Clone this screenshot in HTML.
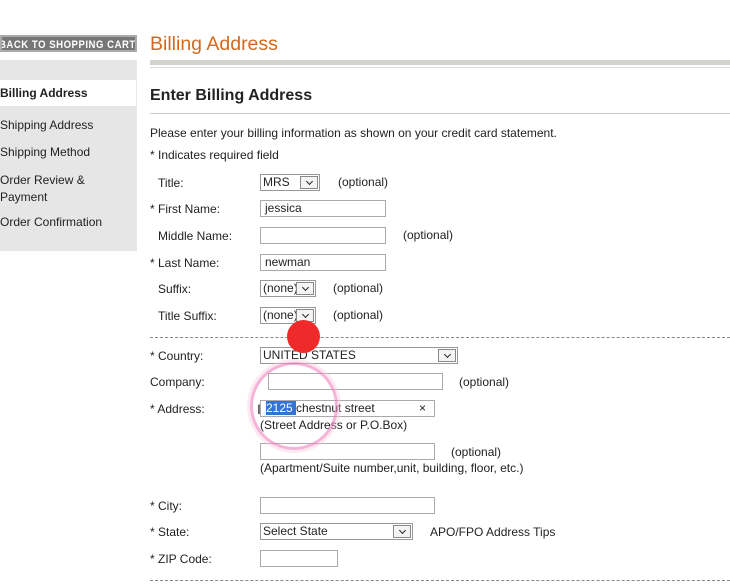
<!DOCTYPE html><html><head><style>
*{margin:0;padding:0;box-sizing:border-box}
body{width:730px;height:587px;overflow:hidden;background:#fff;font-family:"Liberation Sans",Arial,sans-serif;font-size:12px;color:#222;position:relative}
.a{position:absolute;white-space:nowrap}
.l{position:absolute;line-height:14px}
.in{position:absolute;height:17px;border:1px solid #aaa;background:#fff;padding:1px 4px;font-size:12px;line-height:13px}
.sel{position:absolute;height:17px;border:1px solid #999;background:#fff;padding:0 2px;font-size:12px;line-height:15px}
.sel i{position:absolute;right:1px;top:1px;width:18px;height:13px;border:1px solid #888;background:#f4f4f4}
.sel i:after{content:"";position:absolute;left:6px;top:2px;width:4px;height:4px;border-right:1.5px solid #222;border-bottom:1.5px solid #222;transform:rotate(45deg)}
</style></head><body>
<div class="a" style="left:0;top:35px;width:137px;height:17px;background:#777;border:2px solid #aaa;overflow:hidden"><span style="display:inline-block;color:#fff;font-weight:bold;font-size:11px;line-height:13px;transform:scaleX(0.87);transform-origin:0 0;letter-spacing:0.6px;margin-left:-3px">BACK TO SHOPPING CART</span></div>
<div class="a" style="left:0;top:60px;width:137px;height:191px;background:#e6e6e6"></div>
<div class="a" style="left:0;top:80px;width:136px;height:26px;background:#fff;font-weight:bold;line-height:26px">Billing Address</div>
<div class="l" style="left:0;top:118px">Shipping Address</div>
<div class="l" style="left:0;top:145px">Shipping Method</div>
<div class="l" style="left:0;top:172px;line-height:17px">Order Review &amp;<br>Payment</div>
<div class="l" style="left:0;top:215px">Order Confirmation</div>
<div class="a" style="left:150px;top:33px;font-size:19.5px;color:#d2691e">Billing Address</div>
<div class="a" style="left:150px;top:60px;width:580px;height:5px;background:#d5d4cc"></div>
<div class="a" style="left:150px;top:67px;width:580px;height:1px;background:#ddd"></div>
<div class="a" style="left:150px;top:87px;font-size:16px;font-weight:bold">Enter Billing Address</div>
<div class="a" style="left:150px;top:113px;width:580px;height:1px;background:#ccc"></div>
<div class="l" style="left:150px;top:126px">Please enter your billing information as shown on your credit card statement.</div>
<div class="l" style="left:150px;top:148px">* Indicates required field</div>
<div class="l" style="left:158px;top:176px">Title:</div>
<div class="sel" style="left:260px;top:174px;width:60px">MRS<i></i></div>
<div class="l" style="left:338px;top:175px">(optional)</div>
<div class="l" style="left:150px;top:202px">* First Name:</div>
<div class="in" style="left:260px;top:200px;width:126px">jessica</div>
<div class="l" style="left:158px;top:229px">Middle Name:</div>
<div class="in" style="left:260px;top:227px;width:126px"></div>
<div class="l" style="left:403px;top:228px">(optional)</div>
<div class="l" style="left:150px;top:256px">* Last Name:</div>
<div class="in" style="left:260px;top:254px;width:126px">newman</div>
<div class="l" style="left:158px;top:282px">Suffix:</div>
<div class="sel" style="left:260px;top:280px;width:56px">(none)<i></i></div>
<div class="l" style="left:333px;top:281px">(optional)</div>
<div class="l" style="left:158px;top:309px">Title Suffix:</div>
<div class="sel" style="left:260px;top:307px;width:56px">(none)<i></i></div>
<div class="l" style="left:333px;top:308px">(optional)</div>
<div class="a" style="left:150px;top:337px;width:580px;border-top:1px dashed #888"></div>
<div class="l" style="left:150px;top:349px">* Country:</div>
<div class="sel" style="left:260px;top:347px;width:198px">UNITED STATES<i></i></div>
<div class="l" style="left:150px;top:375px">Company:</div>
<div class="in" style="left:268px;top:373px;width:175px"></div>
<div class="l" style="left:459px;top:375px">(optional)</div>
<div class="l" style="left:150px;top:402px">* Address:</div>
<div class="in" style="left:260px;top:400px;width:175px;padding-left:5px"><span style="background:#3373d6;color:#fff">2125 </span>chestnut street<span style="position:absolute;right:8px">×</span></div>
<div class="l" style="left:260px;top:418px">(Street Address or P.O.Box)</div>
<div class="in" style="left:260px;top:443px;width:175px"></div>
<div class="l" style="left:451px;top:445px">(optional)</div>
<div class="l" style="left:260px;top:461px">(Apartment/Suite number,unit, building, floor, etc.)</div>
<div class="l" style="left:150px;top:499px">* City:</div>
<div class="in" style="left:260px;top:497px;width:175px"></div>
<div class="l" style="left:150px;top:525px">* State:</div>
<div class="sel" style="left:260px;top:523px;width:153px">Select State<i></i></div>
<div class="l" style="left:430px;top:525px">APO/FPO Address Tips</div>
<div class="l" style="left:150px;top:552px">* ZIP Code:</div>
<div class="in" style="left:260px;top:550px;width:78px"></div>
<div class="a" style="left:150px;top:580px;width:580px;border-top:1px dashed #888"></div>
<div class="a" style="left:250px;top:362px;width:88px;height:88px;border-radius:50%;border:3px solid rgba(240,130,190,.6);box-shadow:0 0 0 3px rgba(250,200,220,.4)"></div>
<div class="a" style="left:287px;top:320px;width:33px;height:33px;border-radius:50%;background:#ee2a2a"></div>
<div class="a" style="left:257px;top:402px;font-size:14px;line-height:14px">I</div>
</body></html>
